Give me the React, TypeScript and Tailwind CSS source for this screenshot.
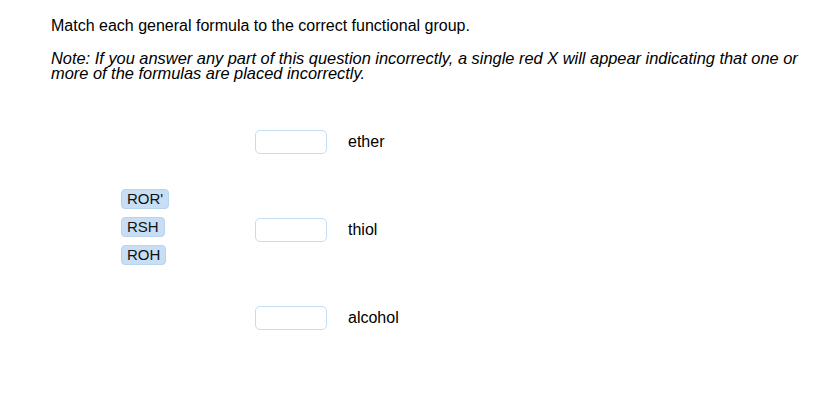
import React from "react";

const font = { fontFamily: '"Liberation Sans", Arial, sans-serif' };

export default function App() {
  const chips = ["ROR'", "RSH", "ROH"];
  const targets = ["ether", "thiol", "alcohol"];
  return (
    <div className="w-[833px] h-[414px] bg-white text-black" style={font}>
      <div className="pl-[51px] pt-[17px]">
        <p className="text-[16px] leading-[18px]">Match each general formula to the correct functional group.</p>
        <p className="mt-[16px] text-[16.4px] leading-[14.5px] italic">
          Note: If you answer any part of this question incorrectly, a single red X will appear indicating that one or
          <br />
          more of the formulas are placed incorrectly.
        </p>
        <div className="mt-[50px] flex">
          <div className="ml-[70px] w-[134px] pt-[59px] flex flex-col items-start gap-[8px]">
            {chips.map((c) => (
              <div
                key={c}
                className="h-[20px] px-[5px] flex items-center rounded-[4px] bg-[#c8def4] border border-[#b9d3ee] text-[15px] text-[#111]"
              >
                {c}
              </div>
            ))}
          </div>
          <div className="flex flex-col gap-[64px]">
            {targets.map((t) => (
              <div key={t} className="flex items-center">
                <div className="w-[72px] h-[24px] rounded-[5px] border border-[#c5dcf2] bg-white" />
                <span className="ml-[21px] text-[16px]">{t}</span>
              </div>
            ))}
          </div>
        </div>
      </div>
    </div>
  );
}
